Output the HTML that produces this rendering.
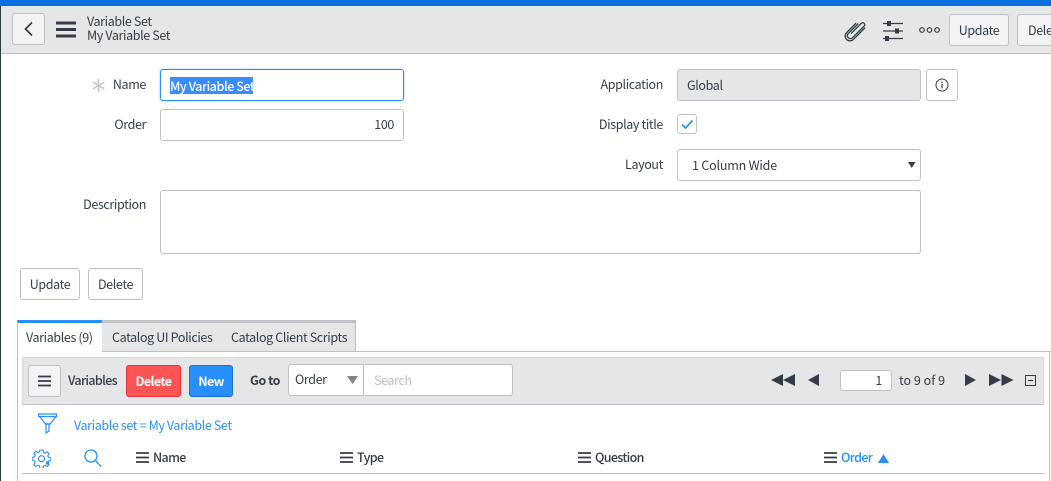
<!DOCTYPE html>
<html><head><meta charset="utf-8">
<style>
html,body{margin:0;padding:0;background:#fff}
#p{position:relative;width:1051px;height:481px;overflow:hidden;background:#fff;font-family:"Noto Sans CJK JP","Liberation Sans",sans-serif;font-size:12.5px;letter-spacing:-.37px;color:#343d47}
#p div,#p span.a,#p svg{position:absolute;box-sizing:border-box}
.t{white-space:nowrap;line-height:18px;height:18px;margin-top:-1px}
.b{background:#fff;border:1px solid #bdc0c4;border-radius:3px}
.btn{background:#fff;border:1px solid #bdc0c4;border-radius:3px;text-align:center;white-space:nowrap}
.r{text-align:right}
.h{font-weight:500;letter-spacing:-.65px}
</style></head><body>
<div id="p">
<div style="left:0;top:0;width:1051px;height:6px;background:#0a6fe0"></div>
<div style="left:0;top:6px;width:1px;height:475px;background:#293e40"></div>
<div style="left:1px;top:6px;width:1050px;height:48px;background:#e4e6e7;border-bottom:1px solid #bdc0c4"></div>

<div class="btn" style="left:12px;top:13px;width:33px;height:32px;background:#f1f3f5"></div>
<svg style="left:12px;top:13px" width="33" height="32"><path d="M20 9.5 L13.5 16 L20 22.5" fill="none" stroke="#343d47" stroke-width="1.7"/></svg>
<svg style="left:56px;top:21px" width="20" height="17"><path d="M0 2h20M0 8.5h20M0 15h20" stroke="#343d47" stroke-width="3"/></svg>
<div class="t" style="left:87px;top:13px">Variable Set</div>
<div class="t" style="left:87px;top:27px">My Variable Set</div>

<svg style="left:844px;top:18px" width="24" height="24" viewBox="0 0 24 24"><g transform="rotate(45 12 12)" fill="none" stroke="#343d47" stroke-width="1.3"><path d="M9 6 V20 a3 3 0 0 0 6 0 V3.5 a2 2 0 0 0 -4 0 V18"/><path d="M7.2 7 V20.5 a4.8 4.8 0 0 0 9.6 0 V4"/></g></svg>
<svg style="left:882px;top:20px" width="22" height="21"><path d="M1 3.5h20M1 11h20M1 18.500h20" stroke="#343d47" stroke-width="1.2"/><path d="M5 1h4v5h-4zM13 8.500h4v5h-4zM3 16h4v5h-4z" fill="#343d47"/></svg>
<svg style="left:919px;top:26px" width="22" height="8"><g fill="none" stroke="#343d47" stroke-width="1.2"><circle cx="3" cy="4" r="2.300"/><circle cx="10.500" cy="4" r="2.300"/><circle cx="18" cy="4" r="2.300"/></g></svg>
<div class="btn" style="left:949px;top:14px;width:60px;height:32px;line-height:29px;background:#f1f3f5">Update</div>
<div class="btn" style="left:1017px;top:14px;width:60px;height:32px;line-height:29px;background:#f1f3f5;text-align:left;padding-left:10px">Delete</div>

<svg style="left:92px;top:79px" width="13" height="13"><path d="M6.500 0v13M0.800 3.200l11.400 6.600M12.200 3.200l-11.400 6.600" stroke="#c3c7cc" stroke-width="1.700"/></svg>
<div class="t r" style="left:60px;top:76px;width:86px">Name</div>
<div class="b" style="left:160px;top:69px;width:244px;height:32px;border-color:#278efc;box-shadow:0 0 2px rgba(39,142,252,.5)"></div>
<div class="t h" style="left:170px;top:78px;height:17px;line-height:17px;width:83px;background:#3a8bfb;color:#fff;overflow:hidden;letter-spacing:-.45px">My Variable Set</div>
<div class="t r" style="left:60px;top:116px;width:86px">Order</div>
<div class="b" style="left:160px;top:109px;width:244px;height:32px"></div>
<div class="t r" style="left:300px;top:116px;width:94px">100</div>
<div class="t r" style="left:40px;top:196px;width:106px">Description</div>
<div class="b" style="left:160px;top:190px;width:761px;height:64px"></div>

<div class="t r" style="left:563px;top:76px;width:100px">Application</div>
<div class="b" style="left:677px;top:69px;width:244px;height:32px;background:#e4e6e7"></div>
<div class="t" style="left:687px;top:77px">Global</div>
<div class="b" style="left:926px;top:69px;width:32px;height:32px"></div>
<svg style="left:935px;top:78px" width="14" height="14"><circle cx="7" cy="7" r="6" fill="none" stroke="#343d47" stroke-width="1"/><path d="M7 6v4.500M7 3.500v1.500" stroke="#343d47" stroke-width="1.200"/></svg>
<div class="t r" style="left:563px;top:116px;width:100px">Display title</div>
<div class="b" style="left:677px;top:114px;width:20px;height:20px"></div>
<svg style="left:677px;top:114px" width="20" height="20"><path d="M5 10.500l3.500 3.500 7-7.500" fill="none" stroke="#278efc" stroke-width="1.700"/></svg>
<div class="t r" style="left:563px;top:156px;width:100px">Layout</div>
<div class="b" style="left:677px;top:149px;width:244px;height:32px"></div>
<div class="t" style="left:692px;top:157px;letter-spacing:-.2px">1 Column Wide</div>
<svg style="left:908px;top:161px" width="8" height="8"><path d="M0 1h7.500L3.750 7z" fill="#343d47"/></svg>

<div class="btn" style="left:20px;top:268px;width:60px;height:32px;line-height:29px">Update</div>
<div class="btn" style="left:88px;top:268px;width:55px;height:32px;line-height:29px">Delete</div>

<div style="left:17px;top:320px;width:86px;height:32px;background:#fff;border-top:3px solid #278efc;border-left:1px solid #bdc0c4;border-right:1px solid #bdc0c4"></div>
<div style="left:102px;top:320px;width:120px;height:32px;background:#e4e6e7;border-top:3px solid #bdc0c4;border-right:1px solid #bdc0c4;border-bottom:1px solid #bdc0c4"></div>
<div style="left:221px;top:320px;width:135px;height:32px;background:#e4e6e7;border-top:3px solid #bdc0c4;border-right:1px solid #bdc0c4;border-bottom:1px solid #bdc0c4"></div>
<div class="t" style="left:26px;top:329px">Variables (9)</div>
<div class="t" style="left:112px;top:329px">Catalog UI Policies</div>
<div class="t" style="left:231px;top:329px">Catalog Client Scripts</div>
<div style="left:356px;top:351px;width:695px;height:1px;background:#bdc0c4"></div>
<div style="left:17px;top:352px;width:1px;height:129px;background:#bdc0c4"></div>
<div style="left:1049px;top:352px;width:1px;height:129px;background:#bdc0c4"></div>

<div style="left:22px;top:357px;width:1022px;height:48px;background:#e4e6e7;border:1px solid #d6d8da;border-bottom:1px solid #bdc0c4"></div>
<div class="btn" style="left:28px;top:365px;width:33px;height:32px;background:#f1f3f5"></div>
<svg style="left:38px;top:375px" width="13" height="12"><path d="M0 1.500h13M0 6h13M0 10.500h13" stroke="#343d47" stroke-width="1.700"/></svg>
<div class="t h" style="left:68px;top:372px">Variables</div>
<div class="btn" style="left:126px;top:365px;width:55px;height:32px;line-height:29px;background:#fb5454;border-color:#f0303a;color:#fff;font-weight:700;letter-spacing:-.6px">Delete</div>
<div class="btn" style="left:189px;top:365px;width:44px;height:32px;line-height:29px;background:#278efc;border-color:#1a6fd0;color:#fff;font-weight:700;letter-spacing:-.6px">New</div>
<div class="t" style="left:250px;top:372px;font-weight:700;letter-spacing:-.5px">Go to</div>
<div class="b" style="left:288px;top:364px;width:225px;height:32px"></div>
<div style="left:363px;top:364px;width:1px;height:32px;background:#bdc0c4"></div>
<div class="t" style="left:295px;top:371px">Order</div>
<svg style="left:347px;top:376px" width="11" height="8"><path d="M0 0h11L5.500 8z" fill="#7f858b"/></svg>
<div class="t" style="left:374px;top:372px;color:#b9bcc0">Search</div>

<svg style="left:771px;top:374px" width="25" height="13"><path d="M12 0v12L0 6zM24 0v12L12 6z" fill="#343d47"/></svg>
<svg style="left:808px;top:374px" width="12" height="13"><path d="M11 0v12L0 6z" fill="#343d47"/></svg>
<div class="b" style="left:840px;top:370px;width:52px;height:21px"></div>
<div class="t r" style="left:850px;top:372px;width:32px">1</div>
<div class="t" style="left:899px;top:372px;letter-spacing:0">to 9 of 9</div>
<svg style="left:965px;top:374px" width="12" height="13"><path d="M0 0v12l11-6z" fill="#343d47"/></svg>
<svg style="left:989px;top:374px" width="25" height="13"><path d="M0 0v12l12-6zM12.500 0v12l12-6z" fill="#343d47"/></svg>
<svg style="left:1025px;top:375px" width="11" height="11"><rect x=".5" y=".5" width="10" height="10" fill="none" stroke="#343d47"/><path d="M3 5.500h5" stroke="#343d47" stroke-width="1.200"/></svg>

<svg style="left:38px;top:413px" width="20" height="21"><g fill="none" stroke="#278efc" stroke-width="1.200"><path d="M0.500 1h18v2.500H0.500z"/><path d="M1.500 3.500L7.500 11h4.500l6-7.500"/><path d="M8 11h3v7l-3 2z"/></g></svg>
<div class="t" style="left:74px;top:417px;color:#278efc">Variable set = My Variable Set</div>

<svg style="left:32px;top:449px" width="19" height="19" viewBox="0 0 19 19"><g fill="none" stroke="#278efc" stroke-width="1.100"><path d="M8 1h3l.5 2.400 1.600.7 2-1.300 2 2-1.300 2 .7 1.600 2.400.5v2.600l-2.400.5-.7 1.600 1.300 2-2 2-2-1.300-1.600.7-.5 2.400H8l-.5-2.400-1.600-.7-2 1.300-2-2 1.300-2-.7-1.600L0 11V8.400l2.400-.5.700-1.600-1.300-2 2-2 2 1.300 1.600-.7z"/><circle cx="9.500" cy="9.700" r="3"/></g><circle cx="15.500" cy="14" r="1.700" fill="#278efc"/></svg>
<svg style="left:84px;top:449px" width="18" height="19"><g fill="none" stroke="#278efc" stroke-width="1.300"><circle cx="7" cy="7" r="6"/><path d="M11.500 11.500L17 17.500"/></g></svg>

<svg style="left:136px;top:452px" width="13" height="11"><path d="M0 1h13M0 5.500h13M0 10h13" stroke="#343d47" stroke-width="1.700"/></svg>
<div class="t h" style="left:153px;top:449px">Name</div>
<svg style="left:340px;top:452px" width="13" height="11"><path d="M0 1h13M0 5.500h13M0 10h13" stroke="#343d47" stroke-width="1.700"/></svg>
<div class="t h" style="left:357px;top:449px">Type</div>
<svg style="left:578px;top:452px" width="13" height="11"><path d="M0 1h13M0 5.500h13M0 10h13" stroke="#343d47" stroke-width="1.700"/></svg>
<div class="t h" style="left:595px;top:449px">Question</div>
<svg style="left:824px;top:452px" width="13" height="11"><path d="M0 1h13M0 5.500h13M0 10h13" stroke="#343d47" stroke-width="1.700"/></svg>
<div class="t h" style="left:841px;top:449px;color:#278efc">Order</div>
<svg style="left:878px;top:454px" width="11" height="9"><path d="M5.500 0L11 9H0z" fill="#278efc"/></svg>
<div style="left:22px;top:473px;width:1022px;height:1px;background:#bdc0c4"></div>
</div>
</body></html>
